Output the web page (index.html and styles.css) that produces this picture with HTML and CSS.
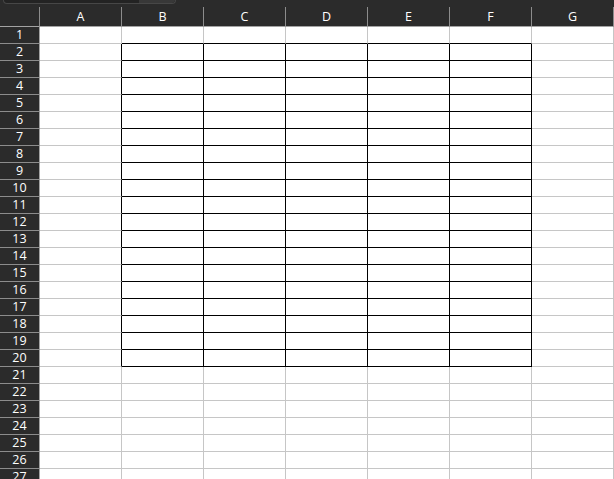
FILE: index.html
```html
<!DOCTYPE html>
<html lang="en">
<head>
  <meta charset="UTF-8">
  <meta name="viewport" content="width=device-width, initial-scale=1.0">
  <title>Sheet</title>
  <link rel="stylesheet" href="styles.css">
</head>
<body>
  <!-- strip left over from the toolbar above the grid -->
  <div class="topbar">
    <div class="hscroll"><div class="hscroll-thumb"></div></div>
  </div>

  <table class="sheet">
    <thead>
      <tr>
        <th class="corner"></th>
        <th>A</th>
        <th>B</th>
        <th>C</th>
        <th>D</th>
        <th>E</th>
        <th>F</th>
        <th>G</th>
      </tr>
    </thead>
    <tbody id="rows"></tbody>
  </table>

  <script>
    const cols = ['A', 'B', 'C', 'D', 'E', 'F', 'G'];
    const tbody = document.getElementById('rows');

    // B2:F20 has "all borders" set
    function inBox(r, c) {
      return r >= 2 && r <= 20 && c >= 1 && c <= 5;
    }

    for (let r = 1; r <= 27; r++) {
      const tr = document.createElement('tr');
      const num = document.createElement('td');
      num.className = 'row-num';
      num.textContent = r;
      tr.appendChild(num);

      cols.forEach((col, c) => {
        const td = document.createElement('td');
        td.className = 'cell';
        if (inBox(r, c)) td.classList.add('boxed');
        if (inBox(r, c + 1)) td.classList.add('edge-right');
        if (inBox(r + 1, c)) td.classList.add('edge-bottom');
        tr.appendChild(td);
      });

      tbody.appendChild(tr);
    }
  </script>
</body>
</html>
```

FILE: styles.css
```css
body {
  margin: 0;
  background: #fff;
  font-family: "Open Sans", "Noto Sans", sans-serif;
  overflow: hidden;
}

.topbar {
  height: 7px;
  background: #2b2b2b;
}

.hscroll {
  width: 171px;
  height: 3px;
  margin-left: 3px;
  border: 1px solid #474747;
  border-top: none;
  border-radius: 0 0 4px 4px;
  background: #232323;
  overflow: hidden;
}

.hscroll-thumb {
  float: right;
  width: 36px;
  height: 100%;
  background: #383838;
}

.sheet {
  border-collapse: separate;
  border-spacing: 0;
  table-layout: fixed;
  width: 614px;
}

.sheet th {
  width: 81px;
  height: 18px;
  padding: 1px 0 0;
  background: #2b2b2b;
  color: #fff;
  font-size: 12.5px;
  font-weight: normal;
  line-height: 18px;
  text-align: center;
  border-right: 1px solid #8c8c8c;
  border-bottom: 1px solid #a3a3a3;
}

.sheet th.corner {
  width: 39px;
}

.row-num {
  width: 39px;
  height: 16px;
  padding: 0;
  background: #2b2b2b;
  color: #fff;
  font-size: 12.5px;
  line-height: 16px;
  text-align: center;
  border-right: 1px solid #a3a3a3;
  border-bottom: 1px solid #8c8c8c;
}

.cell {
  height: 16px;
  padding: 0;
  border-right: 1px solid #c6c6c6;
  border-bottom: 1px solid #c6c6c6;
}

/* black grid for the bordered range */
.cell.boxed {
  border-right-color: #000;
  border-bottom-color: #000;
}

.cell.edge-right {
  border-right-color: #000;
}

.cell.edge-bottom {
  border-bottom-color: #000;
}
```
